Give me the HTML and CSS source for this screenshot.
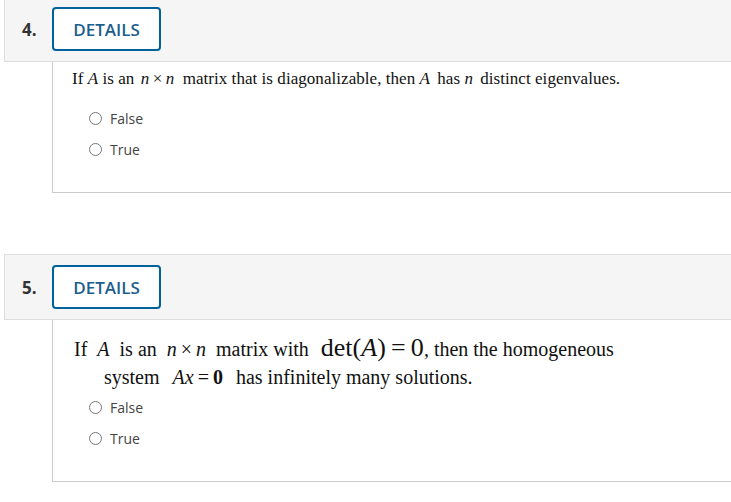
FILE: index.html
```html
<!DOCTYPE html>
<html lang="en">
<head>
<meta charset="utf-8">
<title>Questions</title>
<link rel="stylesheet" href="styles.css">
</head>
<body>
<div class="page">
  <section class="q">
    <div class="q-head">
      <span class="q-num">4.</span>
      <button class="details" type="button">DETAILS</button>
    </div>
    <div class="q-body b1">
      <p class="stmt s1">If <i>A</i> is an <span class="m"><i>n</i>&thinsp;×&thinsp;<i>n</i></span> matrix that is diagonalizable, then <span class="m2"><i>A</i></span> has <span class="m2"><i>n</i></span> distinct eigenvalues.</p>
      <ul class="opts">
        <li><span class="radio"></span><span>False</span></li>
        <li><span class="radio"></span><span>True</span></li>
      </ul>
    </div>
  </section>

  <section class="q q2">
    <div class="q-head">
      <span class="q-num">5.</span>
      <button class="details" type="button">DETAILS</button>
    </div>
    <div class="q-body b2">
      <p class="stmt s2">
        <span class="line">If <span class="mm"><i>A</i></span> is an <span class="mm"><i>n</i>&thinsp;×&thinsp;<i>n</i></span> matrix with <span class="mm big">det(<i>A</i>)&thinsp;=&thinsp;0</span>, then the homogeneous</span>
        <span class="line indent">system <span class="mm wide"><i>Ax</i>&thinsp;=&thinsp;<b>0</b></span> has infinitely many solutions.</span>
      </p>
      <ul class="opts">
        <li><span class="radio"></span><span>False</span></li>
        <li><span class="radio"></span><span>True</span></li>
      </ul>
    </div>
  </section>
</div>
</body>
</html>
```

FILE: styles.css
```css
html, body {
  margin: 0;
  padding: 0;
  background: #ffffff;
}

.page {
  margin-top: -4px;
  margin-left: 4px;
  font-family: "Open Sans", "Liberation Sans", sans-serif;
  color: #333333;
}

.q2 {
  margin-top: 61px;
}

.q-head {
  display: flex;
  align-items: center;
  background: #f5f5f5;
  border: 1px solid #dddddd;
  border-right: none;
  padding: 10px 0 10px 17px;
}

.q-num {
  width: 30px;
  font-size: 17px;
  font-weight: 700;
  color: #333333;
}

.details {
  box-sizing: border-box;
  width: 109px;
  height: 44px;
  margin: 0;
  padding: 0;
  border: 2px solid #00629b;
  border-radius: 4px;
  background: #ffffff;
  font-family: "Open Sans", "Liberation Sans", sans-serif;
  font-size: 17px;
  font-weight: 600;
  color: #1b5e8e;
}

.q-body {
  margin-left: 48px;
  border-left: 1px solid #cccccc;
  border-bottom: 1px solid #cccccc;
  padding-left: 19px;
  box-sizing: border-box;
}

.b1 {
  padding-top: 6px;
  height: 131px;
}

.b2 {
  padding-top: 15px;
  height: 162px;
}

.stmt {
  margin: 0;
  font-family: "Liberation Serif", "Times New Roman", serif;
  color: #111111;
}

.s1 {
  font-size: 17px;
  line-height: 21px;
  letter-spacing: 0.05px;
}

.s1 .m {
  margin: 0 4px 0 2px;
}

.s1 .m2 {
  margin-right: 3px;
}

.s2 {
  margin-left: 2px;
  font-size: 20px;
  line-height: 28px;
}

.s2 .line {
  display: block;
  white-space: nowrap;
}

.s2 .indent {
  padding-left: 30px;
}

.s2 .mm {
  margin: 0 5px;
}

.s2 .wide {
  margin: 0 8px;
}

.s2 .big {
  font-size: 26px;
  line-height: 1;
  margin-left: 7px;
  margin-right: 0;
}

.opts {
  list-style: none;
  margin: 0;
  padding: 0 0 0 17px;
}

.b1 .opts {
  margin-top: 14px;
}

.b2 .opts {
  margin-top: 1px;
}

.opts li {
  display: flex;
  align-items: center;
  height: 31px;
  font-size: 14px;
  color: #444444;
}

.radio {
  box-sizing: border-box;
  width: 13px;
  height: 13px;
  border: 1px solid #777777;
  border-radius: 50%;
  background: #ffffff;
  margin-right: 8px;
}
```
